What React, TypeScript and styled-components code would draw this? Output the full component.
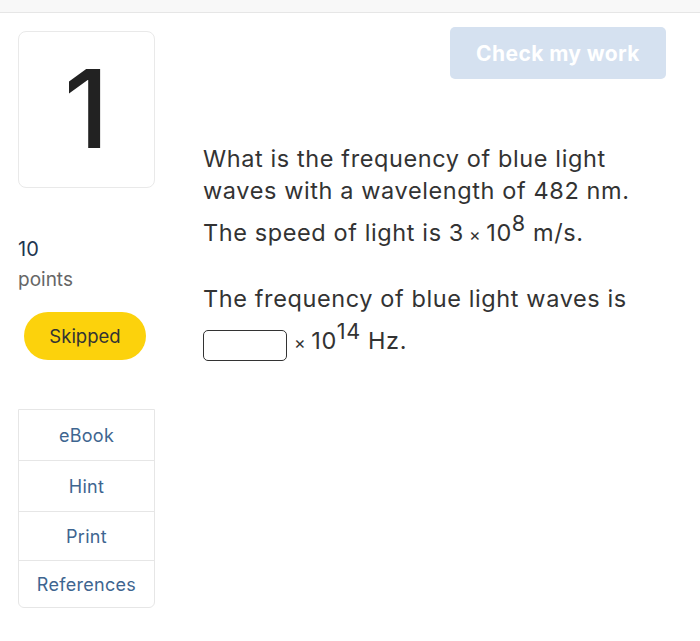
import React from 'react';
import styled, { createGlobalStyle } from 'styled-components';

const GlobalStyle = createGlobalStyle`
  html, body {
    margin: 0;
    padding: 0;
    background: #ffffff;
  }
  body {
    font-family: Inter, "Open Sans", "Liberation Sans", sans-serif;
    color: #333333;
  }
`;

const TopBand = styled.div`
  height: 12px;
  background: #f8f8f8;
  border-bottom: 1px solid #e6e6e6;
`;

const Page = styled.div`
  display: flex;
  padding: 0 34px 0 18px;
`;

const Sidebar = styled.aside`
  width: 137px;
  flex-shrink: 0;
  display: flex;
  flex-direction: column;
  padding-top: 18px;
`;

const NumberCard = styled.div`
  height: 157px;
  box-sizing: border-box;
  padding-bottom: 2px;
  border: 1px solid #e9e9e9;
  border-radius: 8px;
  display: flex;
  align-items: center;
  justify-content: center;
  font-size: 108px;
  font-weight: 500;
  color: #222222;
  line-height: 1;
`;

const Points = styled.div`
  margin-top: 48px;
  font-size: 20px;
  line-height: 26px;
  color: #1e3550;
`;

const PointsLabel = styled.div`
  margin-top: 6px;
  font-size: 19px;
  line-height: 24px;
  color: #666666;
`;

const StatusPill = styled.div`
  margin: 20px 0 0 6px;
  width: 122px;
  height: 48px;
  border-radius: 24px;
  background: #fcd20c;
  display: flex;
  align-items: center;
  justify-content: center;
  font-size: 18.5px;
  color: #333333;
`;

const Menu = styled.nav`
  margin-top: 49px;
  border: 1px solid #e6e6e6;
  border-radius: 0 0 6px 6px;
  display: flex;
  flex-direction: column;
`;

const MenuItem = styled.div<{ $h: number }>`
  height: ${(p) => p.$h}px;
  display: flex;
  align-items: center;
  justify-content: center;
  font-size: 18px;
  letter-spacing: 0.3px;
  color: #3e6590;
  & + & {
    border-top: 1px solid #e6e6e6;
  }
`;

const Main = styled.main`
  flex: 1;
  display: flex;
  flex-direction: column;
  padding-left: 48px;
`;

const ButtonRow = styled.div`
  display: flex;
  justify-content: flex-end;
  padding-top: 14px;
`;

const CheckButton = styled.button`
  width: 216px;
  height: 52px;
  border: none;
  border-radius: 5px;
  background: #d5e1f0;
  color: #ffffff;
  font-family: inherit;
  font-size: 21px;
  font-weight: 700;
  letter-spacing: 0.4px;
`;

const Question = styled.div`
  margin-top: 64px;
  font-size: 23.5px;
  letter-spacing: 0.6px;
  line-height: 32px;
  color: #333333;
`;

const Line = styled.div<{ $gap?: number }>`
  margin-top: ${(p) => p.$gap ?? 0}px;
`;

const Sup = styled.sup`
  font-size: 0.92em;
  line-height: 0;
  vertical-align: 0;
  position: relative;
  top: -0.45em;
`;

const Times = styled.span`
  font-size: 0.75em;
  margin: 0 5px;
`;

const AnswerBox = styled.span`
  display: inline-block;
  width: 84px;
  height: 31px;
  box-sizing: border-box;
  border: 1.5px solid #333333;
  border-radius: 5px;
  vertical-align: -12px;
  margin-right: 2px;
`;

export default function App() {
  const menu = [
    { label: 'eBook', h: 50 },
    { label: 'Hint', h: 50 },
    { label: 'Print', h: 48 },
    { label: 'References', h: 46 },
  ];
  return (
    <>
      <GlobalStyle />
      <TopBand />
      <Page>
        <Sidebar>
          <NumberCard>1</NumberCard>
          <Points>10</Points>
          <PointsLabel>points</PointsLabel>
          <StatusPill>Skipped</StatusPill>
          <Menu>
            {menu.map((m) => (
              <MenuItem key={m.label} $h={m.h}>
                {m.label}
              </MenuItem>
            ))}
          </Menu>
        </Sidebar>
        <Main>
          <ButtonRow>
            <CheckButton>Check my work</CheckButton>
          </ButtonRow>
          <Question>
            <Line>What is the frequency of blue light</Line>
            <Line>waves with a wavelength of 482 nm.</Line>
            <Line $gap={10}>
              The speed of light is 3<Times>×</Times>10<Sup>8</Sup> m/s.
            </Line>
            <Line $gap={32}>The frequency of blue light waves is</Line>
            <Line $gap={10}>
              <AnswerBox />
              <Times>×</Times>10<Sup>14</Sup> Hz.
            </Line>
          </Question>
        </Main>
      </Page>
    </>
  );
}
